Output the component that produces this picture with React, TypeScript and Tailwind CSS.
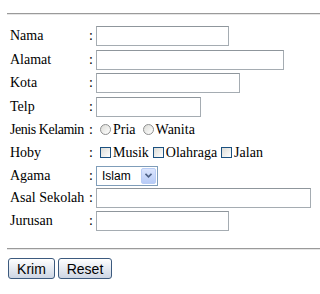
import React from "react";

function TextBox({ w }: { w: string }) {
  return (
    <div
      className={`${w} h-[20px] border border-[#a5acb2] border-t-[#8f969c] bg-white`}
    />
  );
}

function Radio({ label }: { label: string }) {
  return (
    <span className="flex items-center">
      <span className="w-[11px] h-[11px] rounded-full border border-[#8e8f8f] bg-gradient-to-br from-[#dcdcd7] to-white" />
      <span className="ml-[2px]">{label}</span>
    </span>
  );
}

function Check({ label }: { label: string }) {
  return (
    <span className="flex items-center">
      <span className="w-[11px] h-[11px] border border-[#1c5180] bg-gradient-to-br from-[#dcdcd7] to-white" />
      <span className="ml-[2px]">{label}</span>
    </span>
  );
}

function Row({
  label,
  h,
  tight,
  children,
}: {
  label: string;
  h: string;
  tight?: boolean;
  children: React.ReactNode;
}) {
  return (
    <div className={`flex items-center ${h}`}>
      <span
        className={`w-[79px] whitespace-nowrap ${tight ? "tracking-[-0.45px]" : ""}`}
      >
        {label}
      </span>
      <span className="w-[7px]">:</span>
      <div className="flex items-center">{children}</div>
    </div>
  );
}

export default function App() {
  return (
    <div
      className="w-[320px] h-[294px] bg-white text-black text-[14px] leading-none overflow-hidden"
      style={{ fontFamily: '"Liberation Serif", "Times New Roman", serif' }}
    >
      {/* top rule */}
      <div className="pt-[13px] pl-[7px]">
        <div className="h-[2px] border-t border-t-[#9a9a9a] border-b border-b-[#e6e6e6]" />
      </div>

      <div className="pl-[10px] pt-[9px]">
        <Row label="Nama" h="h-[24px]">
          <TextBox w="w-[133px]" />
        </Row>
        <Row label="Alamat" h="h-[23px]">
          <TextBox w="w-[188px]" />
        </Row>
        <Row label="Kota" h="h-[24px]">
          <TextBox w="w-[144px]" />
        </Row>
        <Row label="Telp" h="h-[23px]">
          <TextBox w="w-[105px]" />
        </Row>
        <Row label="Jenis Kelamin" h="h-[23px]" tight>
          <div className="flex items-center gap-[7px] ml-[4px]">
            <Radio label="Pria" />
            <Radio label="Wanita" />
          </div>
        </Row>
        <Row label="Hoby" h="h-[23px]">
          <div className="flex items-center gap-[4px] ml-[4px]">
            <Check label="Musik" />
            <Check label="Olahraga" />
            <Check label="Jalan" />
          </div>
        </Row>
        <Row label="Agama" h="h-[23px]">
          <div className="w-[62px] h-[20px] border border-[#7f9db9] bg-white flex items-center justify-between pl-[5px] pr-[1px]">
            <span
              className="text-[12px] text-black"
              style={{ fontFamily: '"Liberation Sans", Arial, sans-serif' }}
            >
              Islam
            </span>
            <span className="w-[15px] h-[16px] rounded-[2px] border border-[#b9cdf5] bg-gradient-to-b from-[#dbe5fd] to-[#b7cbf6] flex items-center justify-center">
              <svg width="7" height="5" viewBox="0 0 7 5">
                <path
                  d="M0.5 0.8 L3.5 3.8 L6.5 0.8"
                  fill="none"
                  stroke="#4d6185"
                  strokeWidth="1.6"
                />
              </svg>
            </span>
          </div>
        </Row>
        <Row label="Asal Sekolah" h="h-[22px]">
          <TextBox w="w-[215px]" />
        </Row>
        <Row label="Jurusan" h="h-[24px]">
          <TextBox w="w-[133px]" />
        </Row>
      </div>

      {/* bottom rule */}
      <div className="pt-[15px] pl-[7px]">
        <div className="h-[2px] border-t border-t-[#9a9a9a] border-b border-b-[#e6e6e6]" />
      </div>

      <div
        className="flex gap-[3px] pl-[8px] pt-[8px] text-[14px]"
        style={{ fontFamily: '"Liberation Sans", Arial, sans-serif' }}
      >
        <button className="w-[47px] h-[21px] rounded-[3px] border border-[#3c5a7e] bg-gradient-to-b from-white to-[#cdd6e4] text-black">
          Krim
        </button>
        <button className="w-[54px] h-[21px] rounded-[3px] border border-[#3c5a7e] bg-gradient-to-b from-white to-[#cdd6e4] text-black">
          Reset
        </button>
      </div>
    </div>
  );
}
